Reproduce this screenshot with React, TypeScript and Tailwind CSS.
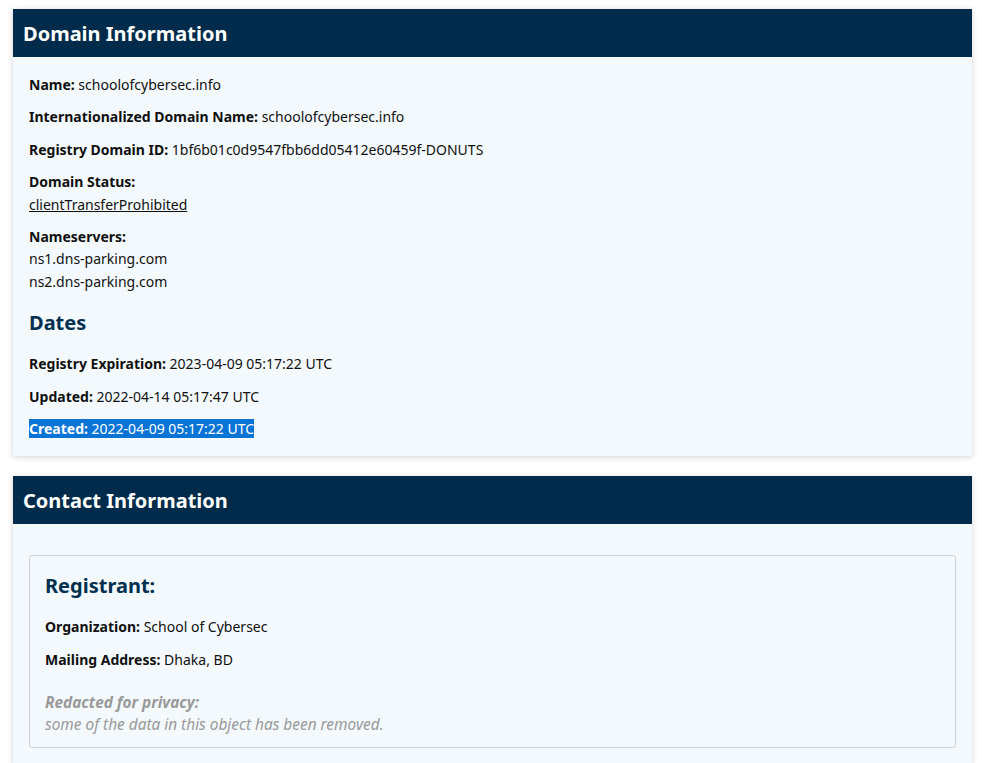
import React from 'react';

function Field({ label, children }: { label: string; children: React.ReactNode }) {
  return (
    <p className="leading-[1.6]">
      <span className="font-bold">{label}</span> {children}
    </p>
  );
}

function Card({ title, children }: { title: string; children: React.ReactNode }) {
  return (
    <section className="bg-[#f3f9fd] shadow-[0_1px_6px_rgba(0,0,0,0.18)]">
      <h2 className="bg-[#002b4a] px-[10px] pt-[1px] h-[48px] flex items-center text-[20px] font-bold text-white">{title}</h2>
      <div className="px-4 pt-[17px] pb-4">{children}</div>
    </section>
  );
}

export default function App() {
  return (
    <div className="min-h-screen bg-white pt-[9px] pl-[13px] pr-[10px] text-[14px] text-[#111] font-['Noto_Sans',sans-serif]">
      <div className="flex flex-col gap-[20px]">
        <Card title="Domain Information">
          <div className="flex flex-col gap-[10px]">
            <Field label="Name:">schoolofcybersec.info</Field>
            <Field label="Internationalized Domain Name:">schoolofcybersec.info</Field>
            <Field label="Registry Domain ID:">1bf6b01c0d9547fbb6dd05412e60459f-DONUTS</Field>
            <div className="leading-[1.6]">
              <p className="font-bold">Domain Status:</p>
              <a href="#" className="underline text-[#111]">clientTransferProhibited</a>
            </div>
            <div className="leading-[1.6]">
              <p className="font-bold">Nameservers:</p>
              <p>ns1.dns-parking.com</p>
              <p>ns2.dns-parking.com</p>
            </div>
            <h3 className="mt-[6px] mb-[6px] text-[20px] leading-[28px] font-bold text-[#00304f]">Dates</h3>
            <Field label="Registry Expiration:">2023-04-09 05:17:22 UTC</Field>
            <Field label="Updated:">2022-04-14 05:17:47 UTC</Field>
            <p className="leading-[1.6]">
              <span className="bg-[#0a74d6] text-white">
                <span className="font-bold">Created:</span> 2022-04-09 05:17:22 UTC
              </span>
            </p>
          </div>
        </Card>
        <Card title="Contact Information">
          <div className="mt-[14px] border border-[#cfd3d6] rounded-[3px] px-[15px] pt-4 pb-[11px]">
            <h3 className="mb-[16px] text-[20px] leading-[28px] font-bold text-[#00304f]">Registrant:</h3>
            <div className="flex flex-col gap-[10px]">
              <Field label="Organization:">School of Cybersec</Field>
              <Field label="Mailing Address:">Dhaka, BD</Field>
              <div className="mt-[11px] text-[15.4px] leading-[22px] italic text-[#9a9a9a]">
                <p className="font-bold">Redacted for privacy:</p>
                <p>some of the data in this object has been removed.</p>
              </div>
            </div>
          </div>
        </Card>
      </div>
    </div>
  );
}
